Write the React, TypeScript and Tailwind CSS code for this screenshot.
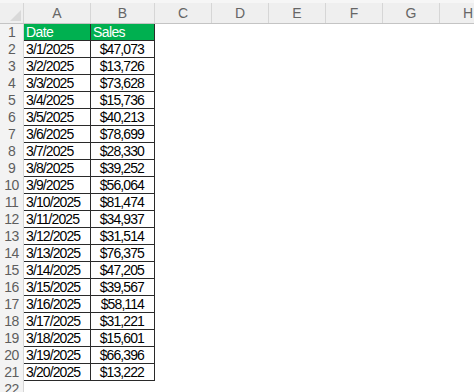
import React from "react";

const data: [string, string][] = [
  ["3/1/2025", "$47,073"],
  ["3/2/2025", "$13,726"],
  ["3/3/2025", "$73,628"],
  ["3/4/2025", "$15,736"],
  ["3/5/2025", "$40,213"],
  ["3/6/2025", "$78,699"],
  ["3/7/2025", "$28,330"],
  ["3/8/2025", "$39,252"],
  ["3/9/2025", "$56,064"],
  ["3/10/2025", "$81,474"],
  ["3/11/2025", "$34,937"],
  ["3/12/2025", "$31,514"],
  ["3/13/2025", "$76,375"],
  ["3/14/2025", "$47,205"],
  ["3/15/2025", "$39,567"],
  ["3/16/2025", "$58,114"],
  ["3/17/2025", "$31,221"],
  ["3/18/2025", "$15,601"],
  ["3/19/2025", "$66,396"],
  ["3/20/2025", "$13,222"],
];

const otherCols = ["C", "D", "E", "F", "G", "H"];

function RowHead({ n }: { n: number }) {
  return (
    <div className="w-[24px] shrink-0 h-full flex items-center justify-center bg-[#f3f3f3] border-r border-[#d6d6d6] text-[14px] text-[#5e5e5e] tracking-[-0.6px]">
      {n}
    </div>
  );
}

export default function App() {
  return (
    <div className="w-[474px] h-[392px] overflow-hidden bg-white font-['Liberation_Sans',Arial,sans-serif]">
      {/* column header */}
      <div className="flex h-[24px] bg-[#efefef] border-b border-[#c4c4c4] border-t-[3px] border-t-[#f6f6f6]">
        <div className="w-[24px] shrink-0 relative border-r border-[#d6d6d6]">
          <svg className="absolute right-[2px] bottom-[2px]" width="11" height="11" viewBox="0 0 11 11">
            <polygon points="11,0 11,11 0,11" fill="#d9d9d9" />
          </svg>
        </div>
        <div className="w-[67px] shrink-0 flex items-center justify-center text-[14px] text-[#666] border-r border-[#d6d6d6]">A</div>
        <div className="w-[64px] shrink-0 flex items-center justify-center text-[14px] text-[#666] border-r border-[#d6d6d6]">B</div>
        {otherCols.map((c) => (
          <div key={c} className="w-[57px] shrink-0 flex items-center justify-center text-[14px] text-[#666] border-r border-[#d6d6d6]">
            {c}
          </div>
        ))}
      </div>

      {/* header row */}
      <div className="flex h-[17px]">
        <RowHead n={1} />
        <div className="w-[67px] shrink-0 h-full bg-[#00b050] border-r border-b border-[#2a2a2a] flex items-center pl-[2px] text-[14px] text-white tracking-[-0.6px]">
          Date
        </div>
        <div className="w-[64px] shrink-0 h-full bg-[#00b050] border-r border-b border-[#2a2a2a] flex items-center pl-[2px] text-[14px] text-white tracking-[-0.6px]">
          Sales
        </div>
      </div>

      {data.map(([d, s], i) => (
        <div key={d} className="flex h-[17px]">
          <RowHead n={i + 2} />
          <div className="w-[67px] shrink-0 h-full border-r border-b border-[#2a2a2a] flex items-center pl-[2px] text-[14px] text-black tracking-[-0.9px]">
            {d}
          </div>
          <div className="w-[64px] shrink-0 h-full border-r border-b border-[#2a2a2a] flex items-center justify-end pr-[10px] text-[14px] text-black tracking-[-0.9px]">
            {s}
          </div>
        </div>
      ))}

      <div className="flex h-[17px]">
        <RowHead n={22} />
      </div>
    </div>
  );
}
